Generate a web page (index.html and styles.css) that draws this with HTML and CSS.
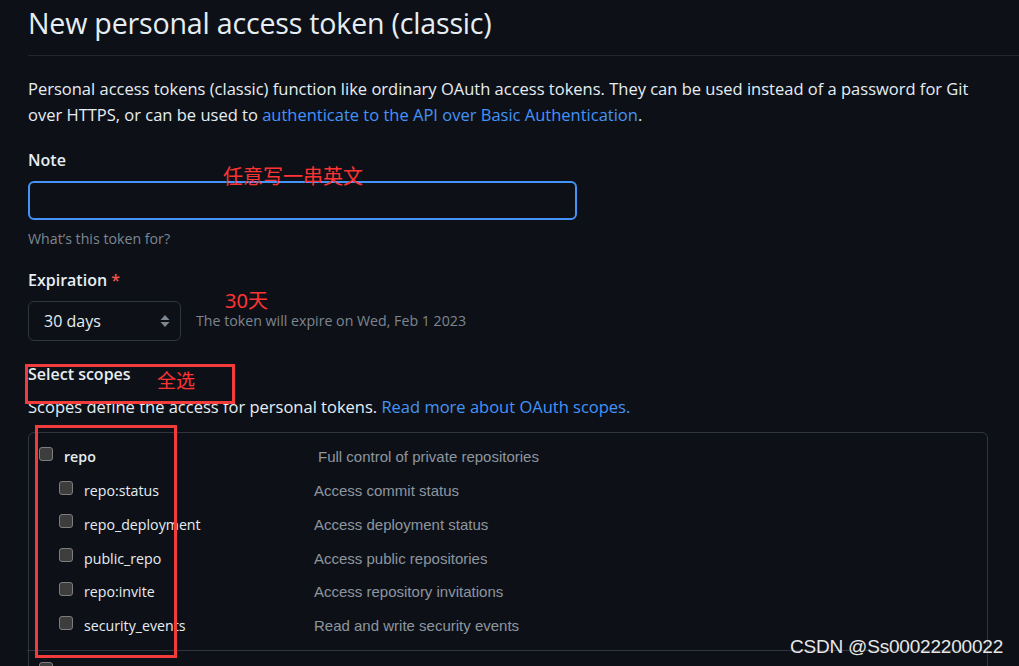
FILE: index.html
```html
<!DOCTYPE html>
<html lang="en">
<head>
<meta charset="utf-8">
<title>New personal access token (classic)</title>
<link rel="stylesheet" href="styles.css">
</head>
<body>
<div class="page">
  <div class="header">
    <h1 class="title">New personal access token (classic)</h1>
  </div>
  <p class="intro">Personal access tokens (classic) function like ordinary OAuth access tokens. They can be used instead of a password for Git over HTTPS, or can be used to <a class="link" href="#">authenticate to the API over Basic Authentication</a>.</p>

  <div class="field field-note">
    <label class="label">Note</label>
    <div class="input"></div>
    <div class="hint">What’s this token for?</div>
    <span class="annot annot-note">任意写一串英文</span>
  </div>

  <div class="field field-exp">
    <label class="label">Expiration <span class="req">*</span></label>
    <div class="exp-row">
      <div class="select">
        <span>30 days</span>
        <svg class="updown" width="10" height="14" viewBox="0 0 10 14"><path d="M5 1 L9.5 6 H0.5 Z M5 13 L9.5 8 H0.5 Z" fill="#7d8590"/></svg>
      </div>
      <span class="exp-note">The token will expire on Wed, Feb 1 2023</span>
    </div>
    <span class="annot annot-exp">30天</span>
  </div>

  <div class="field field-scopes">
    <div class="label">Select scopes</div>
    <p class="scope-desc">Scopes define the access for personal tokens. <a class="link" href="#">Read more about OAuth scopes.</a></p>
    <div class="annot-box box-scopes"></div>
    <span class="annot annot-all">全选</span>
  </div>

  <div class="scopes">
    <div class="group">
      <div class="row parent">
        <span class="cb"></span><span class="name">repo</span><span class="desc">Full control of private repositories</span>
      </div>
      <div class="row child"><span class="cb"></span><span class="name">repo:status</span><span class="desc">Access commit status</span></div>
      <div class="row child"><span class="cb"></span><span class="name">repo_deployment</span><span class="desc">Access deployment status</span></div>
      <div class="row child"><span class="cb"></span><span class="name">public_repo</span><span class="desc">Access public repositories</span></div>
      <div class="row child"><span class="cb"></span><span class="name">repo:invite</span><span class="desc">Access repository invitations</span></div>
      <div class="row child"><span class="cb"></span><span class="name">security_events</span><span class="desc">Read and write security events</span></div>
    </div>
    <div class="group next">
      <div class="row parent"><span class="cb"></span></div>
    </div>
    <div class="annot-box box-repo"></div>
  </div>
</div>
<div class="watermark">CSDN @Ss00022200022</div>
</body>
</html>
```

FILE: styles.css
```css
html, body {
  margin: 0;
  padding: 0;
  background: #0d1117;
  overflow: hidden;
  height: 666px;
}
body {
  font-family: "Open Sans", "Noto Sans", sans-serif;
  color: #e6edf3;
  position: relative;
}
.page {
  padding-left: 28px;
  width: 960px;
  position: relative;
}
.header {
  margin-right: -40px;
  border-bottom: 1px solid #21262d;
  padding-bottom: 10px;
}
.title {
  margin: 0;
  font-weight: 400;
  font-size: 28.6px;
  line-height: 45px;
  color: #e6edf3;
  letter-spacing: -0.2px;
}
.intro {
  margin: 20px 0 0;
  font-size: 16.5px;
  line-height: 26px;
  color: #e6edf3;
}
.link {
  color: #4493f8;
  text-decoration: none;
}
.field { position: relative; }
.field-note { margin-top: 20px; }
.label {
  display: block;
  font-weight: 600;
  font-size: 16px;
  line-height: 24px;
  color: #e6edf3;
}
.input {
  margin-top: 9px;
  width: 545px;
  height: 35px;
  border: 2px solid #4493f8;
  border-radius: 6px;
  background: #0d1117;
}
.hint {
  margin-top: 9px;
  font-size: 14.2px;
  line-height: 20px;
  color: #7d8590;
}
.field-exp { margin-top: 19px; }
.req { color: #f85149; }
.exp-row {
  margin-top: 9px;
  display: flex;
  align-items: center;
  gap: 15px;
}
.select {
  box-sizing: border-box;
  width: 153px;
  height: 40px;
  border: 1px solid #30363d;
  border-radius: 6px;
  display: flex;
  align-items: center;
  justify-content: space-between;
  padding: 0 10px 0 15px;
  font-size: 16px;
  color: #e6edf3;
}
.exp-note {
  font-size: 14.2px;
  color: #7d8590;
  margin-top: -2px;
}
.field-scopes { margin-top: 21px; }
.scope-desc {
  margin: 11px 0 0;
  font-size: 16.5px;
  line-height: 20px;
  color: #e6edf3;
}
.scopes {
  position: relative;
  margin-top: 15px;
  border: 1px solid #30363d;
  border-radius: 6px;
  height: 300px;
}
.group {
  padding: 7px 0 7px;
  border-bottom: 1px solid #30363d;
  margin-left: -2px;
  padding-left: 2px;
}
.row {
  display: flex;
  align-items: center;
  height: 33.75px;
}
.row.parent { padding-left: 10px; }
.row.child { padding-left: 30px; }
.cb {
  box-sizing: border-box;
  width: 14px;
  height: 14px;
  border: 1px solid #7d7d7d;
  border-radius: 3px;
  background: #3d3d3d;
  margin-top: -6px;
  flex: none;
}
.name {
  font-size: 14.2px;
  color: #e6edf3;
  margin-left: 11px;
}
.parent .name { font-weight: 600; width: 254px; }
.child .name { width: 230px; }
.desc {
  font-family: "Liberation Sans", Arial, sans-serif;
  font-size: 15px;
  color: #8d96a0;
}
.group.next { border-bottom: none; padding-top: 2px; }
.group.next .cb { margin-top: 0; }
.annot {
  position: absolute;
  color: #ff3333;
  font-family: "Noto Sans CJK SC", sans-serif;
  font-size: 19px;
  line-height: 22px;
  white-space: nowrap;
}
.annot-note { left: 195px; top: 17px; font-size: 20px; }
.annot-exp { left: 197px; top: 22px; font-family: "Noto Sans", "Noto Sans CJK SC", sans-serif; font-size: 20px; }
.annot-all { left: 129px; top: 7px; }
.annot-box {
  position: absolute;
  border: 3px solid #f23b3b;
  box-sizing: border-box;
}
.box-scopes { left: -3px; top: 2px; width: 210px; height: 40px; }
.box-repo { left: 6px; top: -8px; width: 142px; height: 233px; }
.watermark {
  position: absolute;
  left: 790px;
  top: 636px;
  font-family: "Liberation Sans", Arial, sans-serif;
  font-size: 19px;
  color: #e8e8e8;
  letter-spacing: -0.2px;
}
```
